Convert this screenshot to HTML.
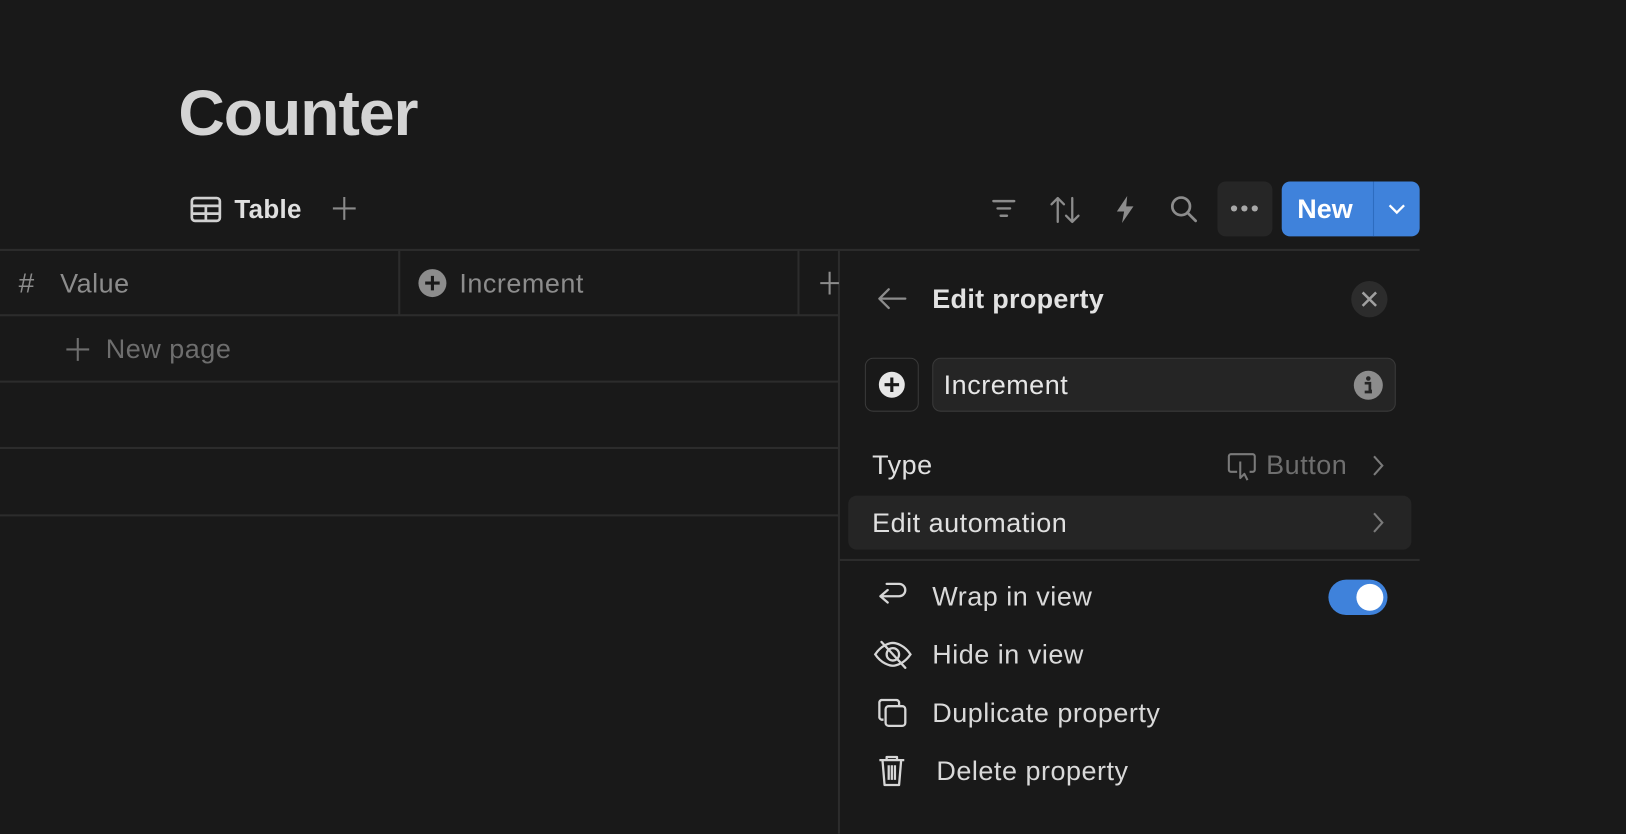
<!DOCTYPE html>
<html><head><meta charset="utf-8"><style>
html,body{margin:0;padding:0;background:#191919;width:1626px;height:834px;overflow:hidden}
#w{position:absolute;left:0;top:0;width:1568px;height:804px;transform:scale(1.037);transform-origin:0 0;font-family:"Liberation Sans",sans-serif;color:#d9d9d9}
.a{position:absolute}
.hl{position:absolute;height:2px;background:#2c2c2c}
.vl{position:absolute;width:2px;background:#2c2c2c}
.t{position:absolute;font-size:26px;line-height:30px;white-space:nowrap;letter-spacing:0.5px}
svg{position:absolute}
</style></head><body><div id="w">
<div class="a" style="left:172px;top:74px;font-size:62px;font-weight:bold;color:#d4d4d4;letter-spacing:-1px">Counter</div>
<svg style="left:183px;top:189px" width="31" height="26" viewBox="0 0 31 26" fill="none" stroke="#d0d0d0" stroke-width="2.6"><rect x="2" y="2" width="27" height="22" rx="3"/><path d="M2 9.5H29M2 17H29M15.5 9.5V24"/></svg>
<div class="t" style="left:226px;top:187px;font-weight:bold;color:#e0e0e0;font-size:25px;letter-spacing:0.3px">Table</div>
<svg style="left:320px;top:189px" width="24" height="24" stroke="#8a8a8a" stroke-width="2"><path d="M12 1V23M1 12H23"/></svg>
<svg style="left:956px;top:190px" width="24" height="24" stroke="#8c8c8c" stroke-width="2.4" stroke-linecap="round"><path d="M2 4H22M6 11H18M9 18H15"/></svg>
<svg style="left:1012px;top:188px" width="30" height="28" fill="none" stroke="#8c8c8c" stroke-width="2.2" stroke-linecap="round" stroke-linejoin="round"><path d="M8 26V3M2 9L8 3L14 9M22 3V26M16 20L22 26L28 20"/></svg>
<svg style="left:1074px;top:188px" width="22" height="28" fill="#8c8c8c"><path d="M13 1L3 16H10L8 27L19 11H12Z"/></svg>
<svg style="left:1128px;top:188px" width="28" height="28" fill="none" stroke="#8c8c8c" stroke-width="2.6" stroke-linecap="round"><circle cx="11" cy="11" r="8.5"/><path d="M17 17L25 25"/></svg>
<div class="a" style="left:1174px;top:175px;width:53px;height:53px;border-radius:8px;background:#262626"></div>
<svg style="left:1186px;top:196px" width="30" height="10" fill="#a8a8a8"><circle cx="4" cy="5" r="3"/><circle cx="14" cy="5" r="3"/><circle cx="24" cy="5" r="3"/></svg>
<div class="a" style="left:1236px;top:175px;width:133px;height:53px;border-radius:8px;background:#3f82db"></div>
<div class="a" style="left:1324px;top:175px;width:1px;height:53px;background:#2d6cc0"></div>
<div class="t" style="left:1251px;top:186px;color:#fff;font-weight:bold;font-size:26px;letter-spacing:0">New</div>
<svg style="left:1338px;top:196px" width="18" height="12" fill="none" stroke="#fff" stroke-width="2.2"><path d="M2 2L9 9L16 2"/></svg>
<div class="hl" style="left:0;top:240px;width:1369px"></div>
<div class="hl" style="left:0;top:303px;width:809px"></div>
<div class="hl" style="left:0;top:367px;width:809px"></div>
<div class="hl" style="left:0;top:431px;width:809px"></div>
<div class="hl" style="left:0;top:496px;width:809px"></div>
<div class="vl" style="left:384px;top:241px;height:63px"></div>
<div class="vl" style="left:769px;top:241px;height:63px"></div>
<div class="vl" style="left:808px;top:241px;height:563px"></div>
<div class="t" style="left:18px;top:258px;color:#8c8c8c;font-size:27px">#</div>
<div class="t" style="left:58px;top:258px;color:#8c8c8c">Value</div>
<svg style="left:403px;top:259px" width="28" height="28"><circle cx="14" cy="14" r="13.5" fill="#8c8c8c"/><path d="M14 7V21M7 14H21" stroke="#191919" stroke-width="3"/></svg>
<div class="t" style="left:443px;top:258px;color:#8c8c8c">Increment</div>
<svg style="left:790px;top:260px" width="20" height="26" stroke="#8c8c8c" stroke-width="2"><path d="M10 2V24M1 13H19"/></svg>
<svg style="left:63px;top:325px" width="24" height="24" stroke="#6e6e6e" stroke-width="2"><path d="M12 1V23M1 12H23"/></svg>
<div class="t" style="left:102px;top:321px;color:#6e6e6e">New page</div>
<svg style="left:845px;top:276px" width="30" height="24" fill="none" stroke="#8c8c8c" stroke-width="2.2" stroke-linecap="round" stroke-linejoin="round"><path d="M28 12H3M12 3L3 12L12 21"/></svg>
<div class="t" style="left:899px;top:273px;font-weight:bold;color:#e2e2e2;letter-spacing:0.3px">Edit property</div>
<div class="a" style="left:1303px;top:271px;width:35px;height:35px;border-radius:50%;background:#2c2c2c"></div>
<svg style="left:1312px;top:280px" width="17" height="17" stroke="#a0a0a0" stroke-width="2.4"><path d="M2 2L15 15M15 2L2 15"/></svg>
<div class="a" style="left:834px;top:345px;width:50px;height:50px;border:1px solid #3a3a3a;border-radius:8px"></div>
<svg style="left:847px;top:358px" width="26" height="26"><circle cx="13" cy="13" r="12.5" fill="#e6e6e6"/><path d="M13 6V20M6 13H20" stroke="#191919" stroke-width="3"/></svg>
<div class="a" style="left:899px;top:345px;width:445px;height:50px;border:1px solid #3a3a3a;border-radius:8px;background:#252525"></div>
<div class="t" style="left:910px;top:356px;color:#e6e6e6">Increment</div>
<svg style="left:1305px;top:357px" width="29" height="29"><circle cx="14.5" cy="14.5" r="14" fill="#8c8c8c"/><circle cx="14.5" cy="8" r="2.2" fill="#252525"/><path d="M11 12.5H16V20H18M11 21H18" stroke="#252525" stroke-width="2.6" fill="none"/></svg>
<div class="t" style="left:841px;top:433px;color:#e0e0e0">Type</div>
<svg style="left:1183px;top:436px" width="30" height="28" fill="none" stroke="#7a7a7a" stroke-width="2"><path d="M10 19H4A2 2 0 0 1 2 17V4A2 2 0 0 1 4 2H25A2 2 0 0 1 27 4V17A2 2 0 0 1 25 19H22"/><path d="M13 9L13 25L17 21L20 27" stroke-linejoin="round"/></svg>
<div class="t" style="left:1221px;top:433px;color:#6f6f6f">Button</div>
<svg style="left:1322px;top:437px" width="14" height="24" fill="none" stroke="#7a7a7a" stroke-width="2"><path d="M3 3L11 12L3 21"/></svg>
<div class="a" style="left:818px;top:478px;width:543px;height:52px;border-radius:8px;background:#252525"></div>
<div class="t" style="left:841px;top:489px;color:#e0e0e0">Edit automation</div>
<svg style="left:1322px;top:492px" width="14" height="24" fill="none" stroke="#7a7a7a" stroke-width="2"><path d="M3 3L11 12L3 21"/></svg>
<div class="hl" style="left:809px;top:539px;width:560px"></div>
<svg style="left:845px;top:560px" width="32" height="30" fill="none" stroke="#d6d6d6" stroke-width="2.2" stroke-linecap="round" stroke-linejoin="round"><path d="M10 3H22A6 6 0 0 1 22 15H5M11 9L4 15L11 21"/></svg>
<div class="t" style="left:899px;top:560px">Wrap in view</div>
<div class="a" style="left:1281px;top:559px;width:57px;height:34px;border-radius:17px;background:#3f82db"></div>
<div class="a" style="left:1308px;top:563px;width:26px;height:26px;border-radius:50%;background:#fff"></div>
<svg style="left:842px;top:616px" width="38" height="30" fill="none" stroke="#d6d6d6" stroke-width="2.2"><path d="M2 15C8 6 16 4 19 4C22 4 30 6 36 15C30 24 22 26 19 26C16 26 8 24 2 15Z"/><circle cx="19" cy="15" r="6"/><path d="M8 3L31 28" stroke-linecap="round"/></svg>
<div class="t" style="left:899px;top:616px">Hide in view</div>
<svg style="left:845px;top:672px" width="32" height="32" fill="none" stroke="#d6d6d6" stroke-width="2.2"><path d="M7 22H5A3 3 0 0 1 3 20V5A3 3 0 0 1 5 3H19A3 3 0 0 1 22 5V8"/><rect x="9" y="9" width="19" height="19" rx="3"/></svg>
<div class="t" style="left:899px;top:672px">Duplicate property</div>
<svg style="left:846px;top:727px" width="28" height="32" fill="none" stroke="#d6d6d6" stroke-width="2.2" stroke-linejoin="round"><path d="M2 6H26M9 6V3H19V6M5 6L7 30H21L23 6M11 11V25M14 11V25M17 11V25"/></svg>
<div class="t" style="left:903px;top:728px">Delete property</div>
</div></body></html>
